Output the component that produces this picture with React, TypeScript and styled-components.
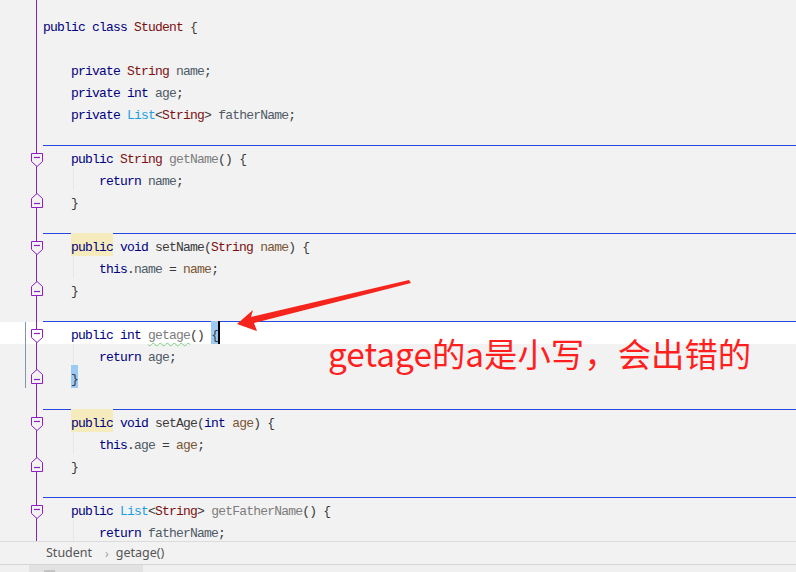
import React from "react";
import styled, { createGlobalStyle } from "styled-components";

type Kind = "kw" | "cls" | "type" | "list" | "field" | "fn" | "fnDim" | "param" | "punct" | "plain";

interface Tok {
  t: string;
  k?: Kind;
  mark?: "yellow" | "blue";
  caret?: boolean;
  typo?: boolean;
}

interface Line {
  indent: number;
  toks: Tok[];
  fold?: "start" | "end";
  sep?: boolean;
  current?: boolean;
  changed?: boolean;
  guide?: boolean;
}

const kw = (t: string, mark?: "yellow"): Tok => ({ t, k: "kw", mark });
const sp: Tok = { t: " " };

const lines: Line[] = [
  { indent: 0, toks: [kw("public"), sp, kw("class"), sp, { t: "Student", k: "cls" }, sp, { t: "{", k: "punct" }] },
  { indent: 0, toks: [] },
  { indent: 1, toks: [kw("private"), sp, { t: "String", k: "type" }, sp, { t: "name", k: "field" }, { t: ";", k: "punct" }] },
  { indent: 1, toks: [kw("private"), sp, kw("int"), sp, { t: "age", k: "field" }, { t: ";", k: "punct" }] },
  {
    indent: 1,
    toks: [
      kw("private"), sp, { t: "List", k: "list" }, { t: "<", k: "punct" }, { t: "String", k: "type" },
      { t: ">", k: "punct" }, sp, { t: "fatherName", k: "field" }, { t: ";", k: "punct" },
    ],
  },
  { indent: 0, toks: [], sep: true },
  {
    indent: 1, fold: "start",
    toks: [kw("public"), sp, { t: "String", k: "type" }, sp, { t: "getName", k: "fnDim" }, { t: "()", k: "punct" }, sp, { t: "{", k: "punct" }],
  },
  { indent: 2, guide: true, toks: [kw("return"), sp, { t: "name", k: "field" }, { t: ";", k: "punct" }] },
  { indent: 1, fold: "end", toks: [{ t: "}", k: "punct" }] },
  { indent: 0, toks: [], sep: true },
  {
    indent: 1, fold: "start",
    toks: [
      kw("public", "yellow"), sp, kw("void"), sp, { t: "setName", k: "fn" }, { t: "(", k: "punct" },
      { t: "String", k: "type" }, sp, { t: "name", k: "param" }, { t: ")", k: "punct" }, sp, { t: "{", k: "punct" },
    ],
  },
  {
    indent: 2, guide: true,
    toks: [kw("this"), { t: ".", k: "punct" }, { t: "name", k: "field" }, sp, { t: "=", k: "punct" }, sp, { t: "name", k: "param" }, { t: ";", k: "punct" }],
  },
  { indent: 1, fold: "end", toks: [{ t: "}", k: "punct" }] },
  { indent: 0, toks: [], sep: true },
  {
    indent: 1, fold: "start", current: true, changed: true,
    toks: [
      kw("public"), sp, kw("int"), sp, { t: "getage", k: "fnDim", typo: true }, { t: "()", k: "punct" }, sp,
      { t: "{", k: "punct", mark: "blue", caret: true },
    ],
  },
  { indent: 2, guide: true, changed: true, toks: [kw("return"), sp, { t: "age", k: "field" }, { t: ";", k: "punct" }] },
  { indent: 1, fold: "end", changed: true, toks: [{ t: "}", k: "punct", mark: "blue" }] },
  { indent: 0, toks: [], sep: true },
  {
    indent: 1, fold: "start",
    toks: [
      kw("public", "yellow"), sp, kw("void"), sp, { t: "setAge", k: "fn" }, { t: "(", k: "punct" },
      kw("int"), sp, { t: "age", k: "param" }, { t: ")", k: "punct" }, sp, { t: "{", k: "punct" },
    ],
  },
  {
    indent: 2, guide: true,
    toks: [kw("this"), { t: ".", k: "punct" }, { t: "age", k: "field" }, sp, { t: "=", k: "punct" }, sp, { t: "age", k: "param" }, { t: ";", k: "punct" }],
  },
  { indent: 1, fold: "end", toks: [{ t: "}", k: "punct" }] },
  { indent: 0, toks: [], sep: true },
  {
    indent: 1, fold: "start",
    toks: [
      kw("public"), sp, { t: "List", k: "list" }, { t: "<", k: "punct" }, { t: "String", k: "type" }, { t: ">", k: "punct" },
      sp, { t: "getFatherName", k: "fnDim" }, { t: "()", k: "punct" }, sp, { t: "{", k: "punct" },
    ],
  },
  { indent: 2, guide: true, toks: [kw("return"), sp, { t: "fatherName", k: "field" }, { t: ";", k: "punct" }] },
];

const colors: Record<Kind, string> = {
  kw: "#000080",
  cls: "#7b1010",
  type: "#7b1010",
  list: "#1f9fe0",
  field: "#4f5a66",
  fn: "#3a3a3a",
  fnDim: "#7d7d7d",
  param: "#7a5533",
  punct: "#3a3a3a",
  plain: "#3a3a3a",
};

const PURPLE = "#8f1fc2";

function FoldMarker({ dir, fill }: { dir: "start" | "end"; fill: string }) {
  const d =
    dir === "start"
      ? "M0.5 0.5 H11.5 V8.5 L6 13.5 L0.5 8.5 Z"
      : "M6 0.5 L11.5 5.5 V14.5 H0.5 V5.5 Z";
  const y = dir === "start" ? 4.5 : 10.5;
  return (
    <MarkerSvg $dir={dir} width="12" height="15" viewBox="0 0 12 15">
      <path d={d} fill={fill} stroke={PURPLE} strokeWidth="1" />
      <path d={`M3 ${y} H9`} stroke={PURPLE} strokeWidth="1.2" />
    </MarkerSvg>
  );
}

export default function App() {
  return (
    <>
      <GlobalStyle />
      <Editor>
        <CodeArea>
          {lines.map((line, i) => (
            <Row key={i} $current={!!line.current}>
              <Gutter $changed={!!line.changed}>
                {line.fold && <FoldMarker dir={line.fold} fill={line.current ? "#ffffff" : "#f2f2f2"} />}
              </Gutter>
              <Code $sep={!!line.sep} $guide={!!line.guide}>
                {"    ".repeat(line.indent)}
                {line.toks.map((tok, j) => (
                  <Token key={j} $kind={tok.k ?? "plain"} $mark={tok.mark} $caret={!!tok.caret} $typo={!!tok.typo}>
                    {tok.t}
                  </Token>
                ))}
              </Code>
            </Row>
          ))}
        </CodeArea>

        <Breadcrumbs>
          <Crumb>Student</Crumb>
          <CrumbSep>›</CrumbSep>
          <Crumb>getage()</Crumb>
        </Breadcrumbs>
        <ScrollStrip>
          <ScrollThumb>
            <ThumbGrip />
          </ScrollThumb>
        </ScrollStrip>

        <Arrow width="796" height="572" viewBox="0 0 796 572">
          <polygon
            points="237,324 253,310 251,317 409,280 411,283 254,323 257,331"
            fill="#f5241c"
          />
        </Arrow>
        <Note>getage的a是小写，会出错的</Note>
      </Editor>
    </>
  );
}

const GlobalStyle = createGlobalStyle`
  html, body {
    margin: 0;
    padding: 0;
    background: #f2f2f2;
  }
`;

const Editor = styled.div`
  position: relative;
  width: 796px;
  height: 572px;
  overflow: hidden;
  display: flex;
  flex-direction: column;
  background: #f2f2f2;
`;

const CodeArea = styled.div`
  height: 541px;
  padding-top: 14px;
  box-sizing: border-box;
  overflow: hidden;
  flex-shrink: 0;
  background: linear-gradient(
    to right,
    transparent 36px,
    ${PURPLE} 36px,
    ${PURPLE} 37px,
    transparent 37px
  );
`;

const Row = styled.div<{ $current: boolean }>`
  display: flex;
  height: 22px;
  background: ${({ $current }) => ($current ? "#ffffff" : "transparent")};
`;

const Gutter = styled.div<{ $changed: boolean }>`
  position: relative;
  width: 43px;
  flex-shrink: 0;
  background: linear-gradient(
      to right,
      transparent 36px,
      ${PURPLE} 36px,
      ${PURPLE} 37px,
      transparent 37px
    ),
    ${({ $changed }) =>
      $changed
        ? "linear-gradient(to right, transparent 25px, #8296ad 25px, #8296ad 26px, transparent 26px)"
        : "none"};
`;

const MarkerSvg = styled.svg<{ $dir: "start" | "end" }>`
  position: absolute;
  left: 31px;
  top: ${({ $dir }) => ($dir === "start" ? "7px" : "3px")};
  display: block;
`;

const Code = styled.div<{ $sep: boolean; $guide: boolean }>`
  flex: 1;
  box-sizing: border-box;
  padding-top: 5px;
  white-space: pre;
  font-family: "Liberation Mono", monospace;
  font-size: 13px;
  letter-spacing: -0.8px;
  line-height: 17px;
  color: #3a3a3a;
  border-bottom: ${({ $sep }) => ($sep ? "1px solid #2448e0" : "none")};
  background: ${({ $guide }) =>
    $guide
      ? "linear-gradient(to right, transparent 30px, #e6e6e6 30px, #e6e6e6 31px, transparent 31px)"
      : "none"};
`;

const markBg = { yellow: "#f6ebbd", blue: "#9ccaf4" };

const Token = styled.span<{ $kind: Kind; $mark?: "yellow" | "blue"; $caret: boolean; $typo: boolean }>`
  color: ${({ $kind }) => colors[$kind]};
  ${({ $mark }) => ($mark ? `background: ${markBg[$mark]}; padding: 7px 0 1px;` : "")}
  ${({ $caret }) => ($caret ? "border-right: 2px solid #000; margin-right: -2px;" : "")}
  ${({ $typo }) =>
    $typo
      ? "text-decoration: underline wavy #7ccf7c; text-decoration-thickness: 1px; text-underline-offset: 3px;"
      : ""}
`;

const Breadcrumbs = styled.div`
  display: flex;
  align-items: center;
  height: 22px;
  padding-left: 46px;
  border-top: 1px solid #dcdcdc;
  border-bottom: 1px solid #d6d6d6;
  font-family: "Noto Sans", "Liberation Sans", sans-serif;
  font-size: 12.5px;
  color: #555555;
  flex-shrink: 0;
`;

const Crumb = styled.span`
  line-height: 22px;
`;

const CrumbSep = styled.span`
  margin: 0 7px 0 13px;
  color: #a0a0a0;
  font-size: 12px;
`;

const ScrollStrip = styled.div`
  flex: 1;
  background: #f0f0f0;
  padding-left: 29px;
`;

const ScrollThumb = styled.div`
  width: 114px;
  height: 100%;
  background: #e2e2e2;
  padding-left: 15px;
  box-sizing: border-box;
  display: flex;
  align-items: flex-end;
`;

const ThumbGrip = styled.div`
  width: 11px;
  height: 2px;
  background: #c4c4c4;
`;

const Arrow = styled.svg`
  position: absolute;
  left: 0;
  top: 0;
  pointer-events: none;
`;

const Note = styled.div`
  position: absolute;
  left: 328px;
  top: 333px;
  font-family: "Noto Sans CJK SC", "Noto Sans", sans-serif;
  font-size: 33.4px;
  line-height: 40px;
  color: #ff1f1f;
  white-space: nowrap;
`;
